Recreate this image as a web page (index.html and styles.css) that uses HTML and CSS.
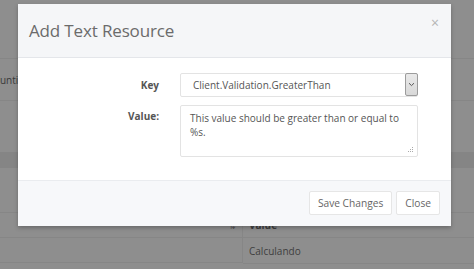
FILE: index.html
```html
<!DOCTYPE html>
<html>
<head>
<meta charset="utf-8">
<link rel="stylesheet" href="styles.css">
</head>
<body>
<div class="page">
  <div class="bg-top"></div>
  <div class="bg-row bg-row-a"><span class="bg-text">Accounting</span></div>
  <div class="bg-gap"></div>
  <div class="bg-band"></div>
  <div class="bg-gap2"></div>
  <div class="bg-table">
    <div class="bg-cell bg-cell-left bg-head"><span class="sort-icon">⇅</span></div>
    <div class="bg-cell bg-head"><b>Value</b></div>
    <div class="bg-cell bg-cell-left"></div>
    <div class="bg-cell">Calculando</div>
  </div>
</div>

<div class="modal">
  <div class="modal-header">
    <h4 class="modal-title">Add Text Resource</h4>
    <span class="close">×</span>
  </div>
  <div class="modal-body">
    <label class="label">Key</label>
    <div class="select">
      <span class="select-text">Client.Validation.GreaterThan</span>
      <span class="select-arrow">
        <svg width="7" height="5" viewBox="0 0 7 5"><path d="M1 1.2 L3.5 3.6 L6 1.2" fill="none" stroke="#555" stroke-width="1"/></svg>
      </span>
    </div>
    <label class="label label-value">Value:</label>
    <div class="textarea">This value should be greater than or equal to %s.
      <svg class="grip" width="6" height="6" viewBox="0 0 6 6"><g fill="#aaa"><rect x="4" y="0" width="1" height="1"/><rect x="4" y="2" width="1" height="1"/><rect x="4" y="4" width="1" height="1"/><rect x="2" y="2" width="1" height="1"/><rect x="2" y="4" width="1" height="1"/><rect x="0" y="4" width="1" height="1"/></g></svg>
    </div>
  </div>
  <div class="modal-footer">
    <button class="btn">Save Changes</button>
    <button class="btn">Close</button>
  </div>
</div>
</body>
</html>
```

FILE: styles.css
```css
* { box-sizing: border-box; }
html, body {
  margin: 0;
  padding: 0;
  width: 474px;
  height: 269px;
  overflow: hidden;
  background: #8e8e8e;
  font-family: "Open Sans", "Liberation Sans", sans-serif;
}
.page {
  width: 474px;
  height: 269px;
  display: flex;
  flex-direction: column;
  color: #3c3c3c;
  font-size: 10px;
}
.bg-top { height: 59px; border-bottom: 1px solid #868686; }
.bg-row-a {
  height: 42px;
  border-bottom: 1px solid #868686;
  display: flex;
  align-items: center;
}
.bg-text { margin-left: -22px; color: #3a3a3a; font-size: 10px; }
.bg-gap { height: 51px; }
.bg-band { height: 16px; background: #858585; }
.bg-gap2 { height: 45px; border-bottom: 1px solid #868686; }
.bg-table {
  display: grid;
  grid-template-columns: 243px 1fr;
}
.bg-cell {
  height: 25px;
  border-bottom: 1px solid #868686;
  display: flex;
  align-items: center;
  padding-left: 6px;
  font-size: 10px;
  color: #3e3e3e;
}
.bg-cell-left { border-right: 1px solid #868686; justify-content: flex-end; padding-right: 6px; }
.bg-cell:nth-child(4) { height: 26px; }
.sort-icon { font-size: 8px; color: #555; }

.modal {
  position: absolute;
  left: 18px;
  top: 4px;
  width: 433px;
  height: 222px;
  background: #fff;
  box-shadow: 0 2px 4px rgba(0,0,0,0.25);
  display: flex;
  flex-direction: column;
}
.modal-header {
  height: 54px;
  background: #f5f6f8;
  border-bottom: 1px solid #e4e6ea;
  display: flex;
  align-items: center;
  justify-content: space-between;
  padding: 0 12px 0 11px;
}
.modal-title {
  margin: 0;
  font-weight: 400;
  font-size: 17px;
  letter-spacing: -0.15px;
  color: #6b6b6b;
}
.close {
  align-self: flex-start;
  margin-top: 11px;
  font-size: 14px;
  color: #b4b4b4;
  line-height: 16px;
}
.modal-body {
  height: 122px;
  display: grid;
  grid-template-columns: 123px 238px;
  grid-template-rows: 24px 52px;
  column-gap: 21px;
  row-gap: 8px;
  padding: 15px 0 0 18px;
  align-content: start;
}
.label {
  text-align: right;
  font-weight: 700;
  font-size: 10px;
  color: #555;
  line-height: 24px;
}
.label-value { line-height: 22px; }
.select {
  border: 1px solid #e3e3e3;
  border-radius: 2px;
  display: flex;
  align-items: center;
  justify-content: space-between;
  padding-left: 12px;
}
.select-text { font-size: 10px; color: #555; }
.select-arrow {
  width: 13px;
  height: 23px;
  margin-right: -1px;
  margin-top: -1px;
  background: linear-gradient(#e9e9e9, #d8d8d8);
  border: 1px solid #9c9c9c;
  border-radius: 2px;
  display: flex;
  align-items: center;
  justify-content: center;
}
.textarea {
  position: relative;
  border: 1px solid #e3e3e3;
  border-radius: 2px;
  padding: 5px 9px;
  font-size: 10px;
  line-height: 14px;
  color: #555;
}
.grip { position: absolute; right: 3px; bottom: 3px; }
.modal-footer {
  flex: 1;
  background: #f7f8fa;
  border-top: 1px solid #eaecef;
  display: flex;
  justify-content: flex-end;
  align-items: flex-start;
  gap: 4px;
  padding: 10px 11px 0 0;
}
.btn {
  height: 24px;
  background: #fff;
  border: 1px solid #e6e6e6;
  border-radius: 2px;
  font-family: "Open Sans", "Liberation Sans", sans-serif;
  font-size: 10.2px;
  color: #666;
  padding: 0 8px;
}
```
